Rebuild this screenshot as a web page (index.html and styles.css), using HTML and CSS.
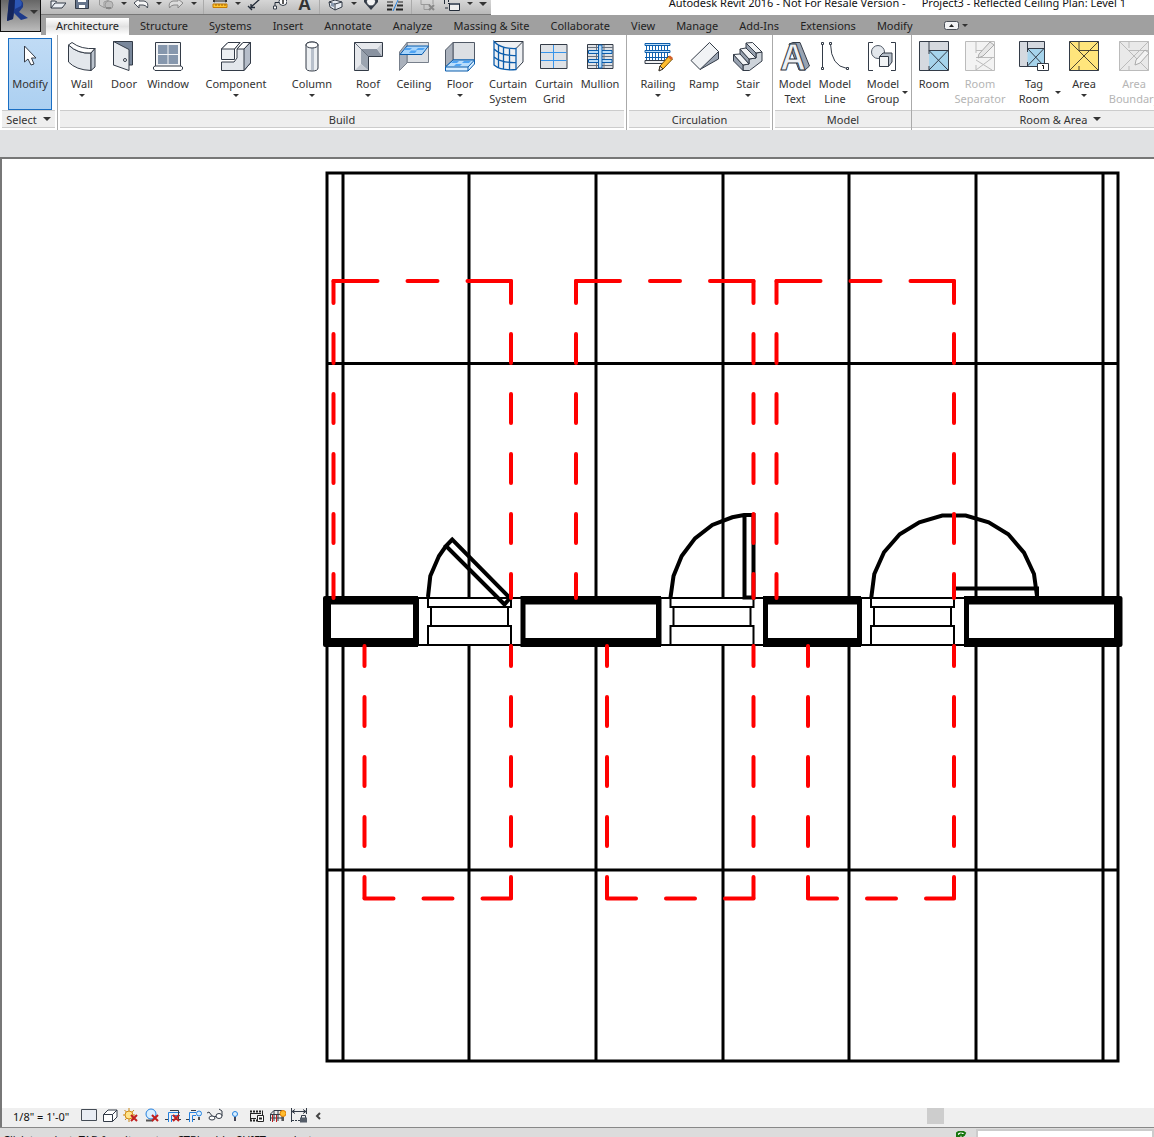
FILE: index.html
```html
<!DOCTYPE html>
<html lang="en">
<head>
  <meta charset="UTF-8" />
  <title>Autodesk Revit 2016 - Reflected Ceiling Plan: Level 1</title>
  <link rel="stylesheet" href="styles.css">
</head>
<body>
  <header class="top">
    <button class="app-button" aria-label="Application menu">
      <svg width="24" height="24" viewBox="0 0 24 24"><path d="M3 0H14Q18 1 17 7L13 12L22 18L15 20L8 13L7 19L1 21Z" fill="#1d3a8a"/><path d="M3 0H9L7 19L1 21Z" fill="#15265c"/><path d="M9 0H14Q17 2 15 6L9 9Z" fill="#2c56b5"/></svg>
      <span class="caret wide"></span>
    </button>

    <div class="title-row">
      <div class="quick-access">
        <button aria-label="Open"><svg viewBox="0 0 16 12"><path d="M1 8V1H5L7 2M1 8L5 3H16L12 8Z" fill="#e9edf2" stroke="#333b47"/></svg></button>
        <button aria-label="Save"><svg viewBox="0 0 16 12"><path d="M1.500 0V8.500H14.500V0" fill="#66758c" stroke="#333b47"/><path d="M4 0H12V2H4ZM5 5H11V8H5Z" fill="#fff"/></svg></button>
        <button aria-label="Synchronize"><svg viewBox="0 0 16 12"><path d="M1.500 0V5L6 7.500V2L11 0M6 7.500L9 8" fill="#ccc" stroke="#999"/><circle cx="11" cy="5" r="4" fill="#bbb" stroke="#999"/><path d="M8 8H13" stroke="#888" stroke-width="2"/></svg></button>
        <span class="caret"></span>
        <button aria-label="Undo"><svg viewBox="0 0 16 12"><path d="M1 3L6 -1V1H11Q16 2 14.500 8Q13 5 10 5H6V8Z" fill="#f7f7f7" stroke="#444b55"/></svg></button>
        <span class="caret"></span>
        <button aria-label="Redo"><svg viewBox="0 0 16 12"><path d="M15 3L10 -1V1H5Q0 2 1.500 8Q3 5 6 5H10V8Z" fill="#ddd" stroke="#888"/></svg></button>
        <span class="caret"></span>
        <i class="split"></i>
        <button aria-label="Measure"><svg viewBox="0 0 16 12"><path d="M1 1H15M3 0L1 1L3 2M13 0L15 1L13 2" fill="none" stroke="#222"/><path d="M1 4H15V7.500H1Z" fill="#ffc62e" stroke="#c77b00"/><path d="M4 4V6M7 4V6M10 4V6M13 4V6" stroke="#a35f00"/></svg></button>
        <span class="caret"></span>
        <button aria-label="Aligned dimension"><svg viewBox="0 0 16 12"><path d="M4 7L13 -1M4 4V7.500H8M1 6L5 10" fill="none" stroke="#222b38" stroke-width="1.300"/></svg></button>
        <button aria-label="Tag"><svg viewBox="0 0 16 12"><path d="M4 7V2.500H8" fill="none" stroke="#222b38"/><circle cx="12" cy="1.500" r="4" fill="#fff" stroke="#333b47"/><path d="M12 0V4" stroke="#222" stroke-width="1.500"/><path d="M2.500 6H5.500V9H2.500Z" fill="#fff" stroke="#333b47"/></svg></button>
        <button aria-label="Text"><svg viewBox="0 0 16 12"><text x="3" y="10" class="letter-small">A</text></svg></button>
        <i class="split"></i>
        <button aria-label="Default 3D view"><svg viewBox="0 0 16 12"><path d="M1 2L7 0L14 2V7L7 10L2 7Z" fill="#e7ebf0" stroke="#333b47"/><path d="M1 2L7 4L14 2M7 4V10" fill="none" stroke="#333b47"/><path d="M3 3H6V7L3 6Z" fill="#8999ae"/></svg></button>
        <span class="caret"></span>
        <button aria-label="Section"><svg viewBox="0 0 16 12"><path d="M1 2L8 10L15 2V0H1Z" fill="#333b47"/><circle cx="8" cy="1.500" r="4.500" fill="#f4f4f4" stroke="#333b47"/></svg></button>
        <button aria-label="Thin lines"><svg viewBox="0 0 16 12"><path d="M0 2H6M11 2H16" stroke="#222"/><path d="M0 5.500H6M10 5.500H16" stroke="#333" stroke-width="2"/><path d="M0 9.500H5M9 9.500H16" stroke="#222" stroke-width="2"/><path d="M6 11L11 0" stroke="#2581df"/></svg></button>
        <i class="split"></i>
        <button aria-label="Close hidden windows"><svg viewBox="0 0 16 12"><path d="M1 0V4.500H10M4 4V9.500H10M13 0V4" fill="none" stroke="#999"/><path d="M9 5L14 10M14 5L9 10" stroke="#888" stroke-width="2"/></svg></button>
        <button aria-label="Switch windows"><svg viewBox="0 0 16 12"><path d="M.500 0V4M4.500 0V2M1 8H4M4 3.500H15.500V10.500H5.500V3.500" fill="#eee" stroke="#222b38"/><path d="M6 4H15" stroke="#56606e" stroke-width="2"/></svg></button>
        <span class="caret"></span>
        <span class="caret wide"></span>
      </div>
      <div class="window-title"><span>Autodesk Revit 2016 - Not For Resale Version -</span><span>Project3 - Reflected Ceiling Plan: Level 1</span></div>
    </div>

    <nav class="tabs">
      <button class="active">Architecture</button>
      <button>Structure</button>
      <button>Systems</button>
      <button>Insert</button>
      <button>Annotate</button>
      <button>Analyze</button>
      <button>Massing &amp; Site</button>
      <button>Collaborate</button>
      <button>View</button>
      <button>Manage</button>
      <button>Add-Ins</button>
      <button>Extensions</button>
      <button>Modify</button>
      <button class="minimize" aria-label="Minimize ribbon">
        <svg width="15" height="9" viewBox="0 0 15 9"><rect x=".5" y=".5" width="14" height="8" rx="2" fill="#f2f3f5" stroke="#4a4f57"/><path d="M5 6L7.500 3L10 6Z" fill="#222"/></svg>
        <span class="caret"></span>
      </button>
    </nav>
  </header>

  <main class="ribbon">
    <section class="panel select-panel">
      <div class="tools">
        <button class="tool w44 current">
          <svg viewBox="0 0 32 32"><path d="M10.500 6V22L14 19L17 25L20 24L17.500 18H22Z" fill="#fff" stroke="#333b47"/></svg>
          <span>Modify</span>
        </button>
      </div>
      <h2>Select <span class="caret wide"></span></h2>
    </section>

    <section class="panel">
      <div class="tools">
        <button class="tool w44">
          <svg viewBox="0 0 32 32"><path d="M2.500 5Q12 14 25 13V30.500Q10 30 2.500 22Z" fill="#e3e7ec" stroke="#333b47"/><path d="M2.500 5L6 2.500Q15 9.500 29 8.500L25 13Q12 14 2.500 5Z" fill="#fff" stroke="#333b47"/><path d="M25 13L29 8.500V27L25 30.500Z" fill="#bcc4ce" stroke="#333b47"/></svg>
          <span>Wall</span><span class="caret"></span>
        </button>
        <button class="tool w40">
          <svg viewBox="0 0 32 32"><path d="M5.500 1.500H24.500V25H5.500Z" fill="#79879b" stroke="#333b47"/><path d="M5.500 1.500L21 9.500V30.500L5.500 25Z" fill="#e8ebef" stroke="#333b47"/><circle cx="17" cy="20" r="1.500" fill="#fff" stroke="#333b47"/></svg>
          <span>Door</span>
        </button>
        <button class="tool w48">
          <svg viewBox="0 0 32 32"><path d="M3.500 2.500H28.500V27.500H3.500Z" fill="#f3f4f6" stroke="#333b47"/><path d="M6 5H26V24H6Z" fill="#8697ad"/><path d="M16 5V24M6 14.500H26" stroke="#f3f4f6"/><path d="M1.500 27L3 26H29L30.500 27V29L29 30.500H3L1.500 29Z" fill="#fff" stroke="#333b47"/></svg>
          <span>Window</span>
        </button>
        <button class="tool w88">
          <svg viewBox="0 0 32 32"><path d="M1.500 22V30.500H24L30.500 23V2.500H23L17 9V18L14 22Z" fill="#e3e7ec" stroke="#333b47"/><path d="M24 9L30.500 2.500V23L24 30.500Z" fill="#b5bdc9" stroke="#333b47"/><path d="M17 9L23 2.500H30L24 9Z" fill="#fff" stroke="#333b47"/><path d="M1.500 9L8 2.500H20L14.500 9V19.500H1.500Z" fill="#eceff2" stroke="#333b47"/><path d="M1.500 9H14.500L20 2.500H8Z" fill="#fff" stroke="#333b47"/></svg>
          <span>Component</span><span class="caret"></span>
        </button>
        <button class="tool w64">
          <svg viewBox="0 0 32 32"><path d="M10 5Q10 2 16 2T22 5V28Q22 31 16 31T10 28Z" fill="#eceff2" stroke="#333b47"/><path d="M15 7H18V30H15Z" fill="#b8c0cb"/><ellipse cx="16" cy="5" rx="6" ry="3" fill="#fff" stroke="#333b47"/></svg>
          <span>Column</span><span class="caret"></span>
        </button>
        <button class="tool w48">
          <svg viewBox="0 0 32 32"><path d="M2.500 2.500H30.500V16.500H16.500V30.500H2.500Z" fill="#e6e8ec"/><path d="M9 9H25L30.500 16.500H16.500Z" fill="#8a93a1"/><path d="M9 9V24L16.500 30.500V16.500Z" fill="#9ba4b0"/><path d="M25 9L30.500 2.500V16.500ZM9 24L16.500 30.500H2.500Z" fill="#c3c8d0"/><path d="M2.500 2.500L16.500 16.500" stroke="#68717e"/><path d="M2.500 2.500H30.500V16.500H16.500V30.500H2.500Z" fill="none" stroke="#333b47"/></svg>
          <span>Roof</span><span class="caret"></span>
        </button>
        <button class="tool w44">
          <svg viewBox="0 0 32 32"><path d="M9 2.500H30.500V22.500H9Z" fill="#dcdfe3" stroke="#777f8b"/><path d="M1.500 12L9 2.500V23L1.500 30.500Z" fill="#aab1bc" stroke="#777f8b"/><path d="M9 6H30.500L24 14.500H2Z" fill="#a9d5fb" stroke="#0b5cab"/><path d="M8 8H14L12 10H6ZM20 8H27L25 10H18ZM13 10.500H19L17 13H11Z" fill="#4ea3f3"/></svg>
          <span>Ceiling</span>
        </button>
        <button class="tool w48">
          <svg viewBox="0 0 32 32"><path d="M9 2.500H30.500V21H9Z" fill="#dcdfe3" stroke="#505966"/><path d="M1.500 10L9 2.500V21L1.500 27Z" fill="#aab1bc" stroke="#505966"/><path d="M1.500 27L9 20H30.500V24L24 31H1.500Z" fill="#d7edff" stroke="#0b5cab"/><path d="M1.500 27L9 20H30.500L24 27Z" fill="#b9ddfb" stroke="#0b5cab"/><path d="M9 21H15L13 23H7ZM20 21H27L25 23H18ZM12 24H18L16 26H10Z" fill="#4ea3f3"/><path d="M24 27V31" stroke="#0b5cab"/></svg>
          <span>Floor</span><span class="caret"></span>
        </button>
        <button class="tool w48">
          <svg viewBox="0 0 32 32"><path d="M2 1.500H31V22L24 30H12L2 25Z" fill="#eef0f3"/><path d="M2 1.500H31L24 8.500M31 1.500V22L24 29.500" fill="none" stroke="#333b47"/><path d="M2 1.500Q9 9 24 8.500V29.500Q9 31 2 25ZM2 9Q9 16 24 15.500M2 17Q9 23 24 22.500M6.500 5V28M11.500 7V29M17.500 8.500V30" fill="none" stroke="#0b5cab" stroke-width="1.300"/></svg>
          <span>Curtain<br>System</span>
        </button>
        <button class="tool w44">
          <svg viewBox="0 0 32 32"><path d="M2.500 4.500H29V28.500H2.500Z" fill="#dfe2e6" stroke="#333b47"/><path d="M15.500 5V28M3 12.500H28.500M3 20.500H28.500" stroke="#3794ea"/></svg>
          <span>Curtain<br>Grid</span>
        </button>
        <button class="tool w48">
          <svg viewBox="0 0 32 32"><path d="M3.500 4.500H29V28.500H3.500Z" fill="#dfe2e6" stroke="#333b47"/><path d="M12.500 5V28M20 5V28M4 7.500H29M4 16.500H29M4 25.500H29" stroke="#68717e"/><path d="M4.500 10.500H28V13.500H4.500ZM4.500 19.500H28V22.500H4.500Z" fill="#b9dcf8" stroke="#0b5cab"/><path d="M14.500 5H18V28H14.500Z" fill="#b9dcf8" stroke="#0b5cab"/></svg>
          <span>Mullion</span>
        </button>
      </div>
      <h2>Build</h2>
    </section>

    <section class="panel roomy">
      <div class="tools">
        <button class="tool w48">
          <svg viewBox="0 0 32 32"><path d="M4.500 6V22M7.500 6V20M10.500 6V20M13.500 6V20M16.500 6V20M19.500 6V20M22.500 6V20M25.500 6V20" stroke="#1567b5"/><path d="M3 3.500H28V5.500H3ZM3 10.500H28V12.500H3Z" fill="#b9dcf8" stroke="#0b5cab"/><path d="M3 17.500H27" stroke="#0b5cab"/><path d="M3 20.500H25V23.500H3Z" fill="#f0f1f3" stroke="#333b47"/><path d="M18 26L27 16L30.500 19L21 29L17 30.500Z" fill="#ffbd2f" stroke="#704800"/><path d="M26 17L28 15.500L31 18L29 20Z" fill="#d4622b"/><path d="M18 26L21 29L17 31Z" fill="#f8dfb7" stroke="#333"/></svg>
          <span>Railing</span><span class="caret"></span>
        </button>
        <button class="tool w44">
          <svg viewBox="0 0 32 32"><path d="M12 29.500L21 17L30.500 11.500V19Z" fill="#9aa4b2" stroke="#333b47"/><path d="M3 20.500L21.500 2.500L30.500 11.500L12 29.500Z" fill="#f1f3f5" stroke="#333b47"/></svg>
          <span>Ramp</span>
        </button>
        <button class="tool w44">
          <svg viewBox="0 0 32 32"><g stroke="#333b47" stroke-linejoin="round"><path d="M30 12L24 13V18L17 19V24L11 25V30.500H17.500L30 21Z" fill="#cdd3da"/><path d="M14 3L24 13V18L14 8ZM8 9L17 19V24L8 14ZM1.500 14.500L11 25V30.500L1.500 21Z" fill="#98a2b0"/><path d="M14 3L20.500 2.500L30 12L24 13ZM8 9L14 8L24 18L17 19ZM1.500 14.500L8 14L17 24L11 25Z" fill="#f3f5f7"/></g></svg>
          <span>Stair</span><span class="caret"></span>
        </button>
      </div>
      <h2>Circulation</h2>
    </section>

    <section class="panel snug">
      <div class="tools">
        <button class="tool w40">
          <svg viewBox="0 0 32 32"><path d="M10 4L14 2.500H21L30.500 26L26 30H20Z" fill="#9aa4b2" stroke="#333b47"/><text x="1" y="30" class="letter-face">A</text></svg>
          <span>Model<br>Text</span>
        </button>
        <button class="tool w40">
          <svg viewBox="0 0 32 32"><path d="M3.500 4V28M11.500 4Q12 26 28 28.500" fill="none" stroke="#333b47"/><path d="M2.500 2.500H4.500V4.500H2.500ZM2.500 27.500H4.500V29.500H2.500ZM10.500 2.500H12.500V4.500H10.500ZM27.500 27.500H29.500V29.500H27.500Z" fill="#fff" stroke="#333b47"/></svg>
          <span>Model<br>Line</span>
        </button>
        <button class="tool w56">
          <svg viewBox="0 0 32 32"><path d="M6 2.500H1.500V30.500H6M24 2.500H28.500V30.500H24" fill="none" stroke="#333b47"/><circle cx="11" cy="12" r="6.500" fill="#e3e7ec" stroke="#505966"/><path d="M12.500 16.500L16 13H25V22L21.500 26.500H12.500Z" fill="#b6bfca" stroke="#333b47"/><path d="M12.500 16.500H21.500V26.500H12.500Z" fill="#f2f4f6" stroke="#333b47"/></svg>
          <span>Model<br>Group</span><span class="caret beside"></span>
        </button>
      </div>
      <h2>Model</h2>
    </section>

    <section class="panel room-panel">
      <div class="tools">
        <button class="tool w44">
          <svg viewBox="0 0 32 32"><path d="M1.500 1.500H30.500V30.500H1.500Z" fill="#d5d9df" stroke="#333b47"/><path d="M11 10.500H30V30H11Z" fill="#a6d4ec"/><path d="M11 1.500V14M11 26V30M11 10.500H30M11 10.500L30 30M30 10.500L11 30" stroke="#333b47"/></svg>
          <span>Room</span>
        </button>
        <button class="tool w48" disabled>
          <svg viewBox="0 0 32 32"><path d="M1.500 1.500H30.500V30.500H1.500Z" fill="#f3f3f3" stroke="#bbb"/><path d="M12 1.500V13M12 25V30M12 10.500H18M12 17.500H30M12 20L28 30M28 18L12 30" stroke="#bbb"/><path d="M15 14L26 2L30 5L19 16L14 18Z" fill="#e7e7e7" stroke="#aaa"/></svg>
          <span>Room<br>Separator</span>
        </button>
        <button class="tool w60">
          <svg viewBox="0 0 32 32"><path d="M1.500 1.500H26.500V26.500H1.500Z" fill="#d5d9df" stroke="#333b47"/><path d="M9.500 8.500H26V26H9.500Z" fill="#a6d4ec"/><path d="M9.500 1.500V12M9.500 22V26M9.500 8.500H26M9.500 8.500L26 26M26 8.500L9.500 26" stroke="#333b47"/><path d="M19.500 23.500H30.500V30.500H19.500Z" fill="#fff" stroke="#333b47"/><path d="M24 25.500H25.500V29" fill="none" stroke="#111"/></svg>
          <span>Tag<br>Room</span><span class="caret beside"></span>
        </button>
        <button class="tool w40">
          <svg viewBox="0 0 32 32"><path d="M1.500 1.500H30.500V30.500H1.500Z" fill="#ffe57c" stroke="#333b47"/><path d="M1.500 1.500L30.500 30.500M30.500 1.500L1.500 30.500M11 1.500V10M11 26V30M11 10.500H30" stroke="#4c4733"/></svg>
          <span>Area</span><span class="caret"></span>
        </button>
        <button class="tool w60" disabled>
          <svg viewBox="0 0 32 32"><path d="M1.500 1.500H30.500V30.500H1.500Z" fill="#e9e9e9" stroke="#bbb"/><path d="M1.500 1.500L30.500 30.500M30.500 1.500L1.500 30.500M11 1.500V8M11 26V30M11 10.500H30" stroke="#bbb"/><path d="M18 20L27 10L31 13L22 23L17 25Z" fill="#f3f3f3" stroke="#aaa"/></svg>
          <span>Area<br>Boundary</span>
        </button>
      </div>
      <h2>Room &amp; Area <span class="caret wide"></span></h2>
    </section>
  </main>

  <div class="options-bar"></div>

  <div class="drawing-area">
    <svg class="plan" viewBox="2 159 1152 949" preserveAspectRatio="xMinYMin meet">
      <defs>
        <g id="frame">
          <path d="M-10 598H94V645H-10Z" class="fine"/>
          <path d="M0 598H83V607H0ZM3 607H80V626H3ZM0 626H83V645H0Z" class="fine"/>
        </g>
      </defs>

      <!-- ceiling grid -->
      <g class="grid-lines">
        <path d="M327 173H1118V1061H327Z"/>
        <path d="M343 173V1061M469 173V1061M596 173V1061M723 173V1061M849 173V1061M976 173V1061M1103 173V1061"/>
        <path d="M327 363.500H1118M327 870H1118"/>
      </g>

      <!-- door frames -->
      <use href="#frame" x="428"/>
      <use href="#frame" x="670.500"/>
      <use href="#frame" x="871"/>

      <!-- walls -->
      <g fill="#fff">
        <path d="M327 600H416V643H327ZM523 600H659V643H523ZM765 600H859V643H765ZM966 600H1118V643H966Z"/>
      </g>
      <g fill-rule="evenodd">
        <path d="M325 596H418V647H325Q323 647 323 645V598Q323 596 325 596ZM331 604.500V638H413V604.500Z"/>
        <path d="M520.500 596H661V647H520.500ZM525.500 604.500V638H656V604.500Z"/>
        <path d="M763 596H861V647H763ZM768 604.500V638H857V604.500Z"/>
        <path d="M964 596H1120Q1122.500 596 1122.500 598V645Q1122.500 647 1120 647H964ZM969 604.500V638H1114V604.500Z"/>
      </g>

      <!-- door swings -->
      <g class="swing">
        <path d="M428 597L430.300 576L439 556L446 546"/>
        <path d="M452.300 539.500L446 546L504.500 604.500L510 598Z"/>
        <path d="M670.500 597.500L673.500 576L681.700 556L695 538.300L712.300 525L732.300 517.300L744 515H753.500V597.500H744.500V515"/>
        <path d="M871.300 597.500L874.300 574L884 552.300L899.700 534.300L919.300 522.300L942.300 515.500H965.700L988.700 522.300L1008.300 534.300L1024 552.700L1034 574L1037 596V588.500H954"/>
      </g>

      <!-- clearances -->
      <g class="clearance">
        <path class="down-top" d="M333.500 281V598M511 281V598M576 281V598M753.500 281V598M776.500 281V598M954 281V598"/>
        <path class="across-top" d="M333.500 281H511M576 281H753.500M776.500 281H954"/>
        <path class="down-bottom" d="M364.500 646V898M511 646V898M607 646V898M753.500 646V898M808 646V898M954 646V898"/>
        <path class="across-bottom" d="M364.500 898.500H511M607 898.500H753.500M808 898.500H954"/>
      </g>
    </svg>
  </div>

  <div class="view-bar">
    <button class="scale">1/8" = 1'-0"</button>
    <div class="view-controls">
      <button aria-label="Detail level"><svg viewBox="0 0 16 16"><path d="M.500 1.500H15.500V12.500H.500Z" fill="#e9edf4" stroke="#444b55"/></svg></button>
      <button aria-label="Visual style"><svg viewBox="0 0 16 16"><path d="M1.500 6.500L6 2H15V9L10.500 13.500H1.500Z" fill="#fff" stroke="#333b47"/><path d="M1.500 6.500H10.500V13.500M10.500 6.500L15 2" fill="none" stroke="#333b47"/></svg></button>
      <button aria-label="Sun path"><svg viewBox="0 0 16 16"><path d="M6 0V14M0 7H12M1.500 2L11 12M11 2L2 12" stroke="#c98616"/><circle cx="6" cy="7" r="4" fill="#ffe48a" stroke="#d08a13"/><path d="M8 7L14 13M14 7L8 13" stroke="#c11f1f" stroke-width="2"/></svg></button>
      <button aria-label="Shadows"><svg viewBox="0 0 16 16"><circle cx="7" cy="6" r="5" fill="#d9efff" stroke="#2581df"/><path d="M2 12.500H9" stroke="#555" stroke-width="2"/><path d="M8 7L14 13M14 7L8 13" stroke="#c11f1f" stroke-width="2"/></svg></button>
      <button aria-label="Crop view"><svg viewBox="0 0 16 16"><path d="M3.500 14V4.500H15M6.500 14V7.500H15" fill="none" stroke="#2581df"/><path d="M0 11.500H3M7 11.500H16M5 2.500H13.500V13" fill="none" stroke="#333b47"/><path d="M8 7L14 13M14 7L8 13" stroke="#c11f1f" stroke-width="2"/></svg></button>
      <button aria-label="Show crop region"><svg viewBox="0 0 16 16"><path d="M3.500 14V4.500H10M6.500 14V7.500H10" fill="none" stroke="#2581df"/><path d="M0 11.500H3M7 11.500H9M5 2.500H10" stroke="#333b47"/><circle cx="13" cy="5.500" r="2.500" fill="#d9efff" stroke="#2581df"/><path d="M13 9V12" stroke="#555" stroke-width="2"/></svg></button>
      <button aria-label="Temporary hide"><svg viewBox="0 0 16 16"><path d="M0 5L2 4L6 9L11 8M12 1L15 3V8" fill="none" stroke="#333b47"/><ellipse cx="5" cy="10" rx="3" ry="2" fill="#fff" stroke="#333b47"/><ellipse cx="12" cy="8" rx="3" ry="2.500" fill="#fff" stroke="#333b47"/></svg></button>
      <button aria-label="Reveal hidden elements"><svg viewBox="0 0 16 16"><circle cx="7" cy="6" r="2.500" fill="#d9efff" stroke="#2581df"/><path d="M7 9V13" stroke="#445" stroke-width="2"/></svg></button>
      <button aria-label="Temporary view properties"><svg viewBox="0 0 16 16"><path d="M1 3.500H14M1 12.500H8" fill="none" stroke="#222" stroke-width="2" stroke-dasharray="2 1"/><path d="M1.500 5V12M13.500 4V7M2 5.500H12M2 10.500H7" fill="none" stroke="#222"/><path d="M8.500 7.500H14.500V13.500H8.500Z" fill="#fff" stroke="#222"/><path d="M10 10.500H13" stroke="#222" stroke-width="2"/></svg></button>
      <button aria-label="Analytical model"><svg viewBox="0 0 16 16"><path d="M.500 13V6L4 2.500H12V13M4 2.500V13M8 2.500V13M0 6.500H12M0 10H12" fill="none" stroke="#333b47"/><path d="M2.500 7V14M6.500 7V14" stroke="#c11f1f"/><circle cx="13" cy="5.500" r="3" fill="#ffbd2f" stroke="#df7d00"/><path d="M13 9V13" stroke="#555" stroke-width="2"/></svg></button>
      <button aria-label="Reveal constraints"><svg viewBox="0 0 16 16"><path d="M.500 0V14M15.500 0V6M1 3.500H15M4 1.500L1 3.500L4 5.500M12 1.500L15 3.500L12 5.500" fill="none" stroke="#333b47"/><path d="M1 12.500H9" stroke="#333b47" stroke-dasharray="2 1"/><path d="M10.500 10V7.500H14.500V10" fill="none" stroke="#333b47"/><path d="M9 9.500H16V14.500H9Z" fill="#555d69"/></svg></button>
      <button aria-label="Scroll left"><svg viewBox="0 0 16 16"><path d="M8 5L5 8L8 11" fill="none" stroke="#444" stroke-width="2"/></svg></button>
    </div>
    <div class="scroll-track"><span class="scroll-thumb"></span></div>
  </div>

  <footer class="status-bar">
    <p>Click to select, TAB for alternates, CTRL adds, SHIFT unselects.</p>
    <button aria-label="Worksets"><svg width="12" height="12" viewBox="0 0 12 12"><path d="M2 2Q6-1 10 2L9 4H7L8 7H4L5 4L2 6Z" fill="#fff" stroke="#17760f" stroke-width="2"/></svg></button>
    <select aria-label="Active workset"></select>
  </footer>
</body>
</html>
```

FILE: styles.css
```css
* {
  box-sizing: border-box;
}
body {
  margin: 0;
  height: 100vh;
  display: flex;
  flex-direction: column;
  overflow: hidden;
  background: #fff;
  color: #333;
  font-family: "Noto Sans", "Open Sans", sans-serif;
  font-size: 11px;
  line-height: 15px;
}
button {
  padding: 0;
  border: none;
  background: none;
  color: inherit;
  font: inherit;
}
svg {
  display: block;
  flex: none;
}

/* dropdown arrows */
.caret {
  flex: none;
  width: 3px;
  height: 3px;
  display: flex;
  justify-content: center;
}
.caret::before {
  content: "";
  flex: none;
  border: 3px solid transparent;
  border-top-color: #333;
  border-bottom: none;
}
.caret.wide {
  width: 8px;
  height: 4px;
}
.caret.wide::before {
  border-width: 4px;
  border-bottom: none;
}

/* title and tabs */
.top {
  display: grid;
  grid-template-columns: 41px 1fr;
  grid-template-rows: 15px 20px;
}
.app-button {
  grid-row: 1 / 3;
  height: 32px;
  display: flex;
  align-items: flex-start;
  padding-left: 5px;
  border: 1px solid #111;
  border-top: none;
  background: linear-gradient(#666, #bbb);
}
.app-button .caret {
  margin-top: 10px;
}
.title-row {
  display: flex;
  justify-content: space-between;
  overflow: hidden;
}
.quick-access {
  display: flex;
  gap: 8px;
  padding: 0 4px 0 9px;
  border-bottom: 1px solid #777;
  background: linear-gradient(#d6d6d6, #b9b9b9);
}
.quick-access svg {
  width: 16px;
  height: 12px;
}
.quick-access .caret {
  margin-top: 2px;
}
.quick-access button {
  height: 12px;
}
.split {
  width: 1px;
  background: #aaa;
}
.window-title {
  display: flex;
  gap: 16px;
  height: 15px;
  margin-top: -5px;
  padding-right: 28px;
  color: #111;
  white-space: nowrap;
}
.tabs {
  display: flex;
  gap: 1px;
  background: #a0a0a0;
}
.tabs button {
  padding: 0 10px;
  color: #222;
  white-space: nowrap;
}
.tabs .active {
  margin: 3px 0 0 5px;
  padding-bottom: 2px;
  background: linear-gradient(#fff, #e2e2e2 50%, #fff);
}
.tabs .minimize {
  display: flex;
  align-items: center;
  gap: 5px;
  padding: 0 20px;
}

/* ribbon */
.ribbon {
  display: flex;
  height: 95px;
  overflow: hidden;
}
.panel {
  flex: none;
  display: flex;
  flex-direction: column;
  padding: 1px 2px 0;
  border-right: 1px solid #aaa;
}
.snug {
  padding-right: 0;
}
.tools {
  flex: 1;
  display: flex;
  align-items: flex-start;
}
.select-panel .tools {
  padding: 0 3px 0 6px;
}
.roomy .tools {
  padding-left: 5px;
}
.room-panel {
  width: 300px;
  padding-left: 0;
}
.tool {
  position: relative;
  height: 73px;
  display: flex;
  flex-direction: column;
  align-items: center;
  justify-content: flex-start;
  padding-top: 4px;
  text-align: center;
  white-space: nowrap;
}
.tool svg {
  width: 32px;
  height: 32px;
  margin-bottom: 4px;
}
.tool .caret {
  margin-top: 3px;
}
.tool .beside {
  position: absolute;
  right: 5px;
  bottom: 15px;
}
.tool:disabled {
  color: #b5b5b5;
}
.current {
  margin-top: 2px;
  height: 72px;
  padding-top: 1px;
  border: 1px solid #1a6fc4;
  background: linear-gradient(#c0dbf5, #acd0f1);
}
.w40 { width: 40px; }
.w44 { width: 44px; }
.w48 { width: 48px; }
.w56 { width: 56px; }
.w60 { width: 60px; }
.w64 { width: 64px; }
.w88 { width: 88px; }
.panel h2 {
  display: flex;
  justify-content: center;
  align-items: center;
  gap: 6px;
  height: 18px;
  margin: 0 0 2px;
  border: 1px solid #ccc;
  border-width: 1px 0;
  background: #eee;
  font-size: 11px;
  font-weight: normal;
}
.letter-small {
  font: bold 18px "Liberation Sans", sans-serif;
  fill: #333;
}
.letter-face {
  font: bold 36px "Liberation Sans", sans-serif;
  fill: #eef0f3;
  stroke: #333b47;
}
.options-bar {
  height: 27px;
  background: #e0e1e3;
}

/* ceiling plan */
.drawing-area {
  flex: 1;
  min-height: 0;
  border: 2px solid #777;
  border-width: 2px 0 0 2px;
}
.plan {
  width: 100%;
  height: 100%;
}
.grid-lines,
.swing {
  fill: none;
  stroke: #000;
  stroke-width: 3;
}
.swing {
  stroke-width: 4;
}
.fine {
  fill: #fff;
  stroke: #000;
  stroke-width: 2;
}
.clearance {
  fill: none;
  stroke: #f00;
  stroke-width: 4;
  stroke-linecap: round;
}
.down-top {
  stroke-dasharray: 29 31;
  stroke-dashoffset: 7;
}
.across-top {
  stroke-dasharray: 44 30 30 30 44 200;
}
.down-bottom {
  stroke-dasharray: 29 31;
  stroke-dashoffset: 9;
}
.across-bottom {
  stroke-dasharray: 29 30;
}

/* bottom bars */
.view-bar {
  display: flex;
  align-items: flex-start;
  height: 19px;
  padding-left: 11px;
  border-left: 2px solid #777;
  background: #efefef;
}
.scale {
  width: 68px;
  padding-top: 1px;
  color: #111;
  text-align: left;
  white-space: nowrap;
}
.view-controls {
  display: flex;
  gap: 5px;
}
.view-controls svg {
  width: 16px;
  height: 16px;
}
.scroll-track {
  flex: 1;
  display: flex;
  height: 16px;
  padding-right: 210px;
  justify-content: flex-end;
}
.scroll-thumb {
  width: 17px;
  background: #cdcdcd;
}
.status-bar {
  display: flex;
  height: 10px;
  overflow: hidden;
  border-top: 1px solid #888;
  background: #dcdcdc;
}
.status-bar p {
  flex: 1;
  margin: 4px 0 0 3px;
  color: #111;
}
.status-bar button {
  width: 24px;
  margin: 3px 3px 0 0;
  display: flex;
  justify-content: center;
}
.status-bar select {
  width: 178px;
  height: 24px;
  margin-top: 1px;
  border: 2px solid #ccc;
  background: #fff;
  appearance: none;
}
```
